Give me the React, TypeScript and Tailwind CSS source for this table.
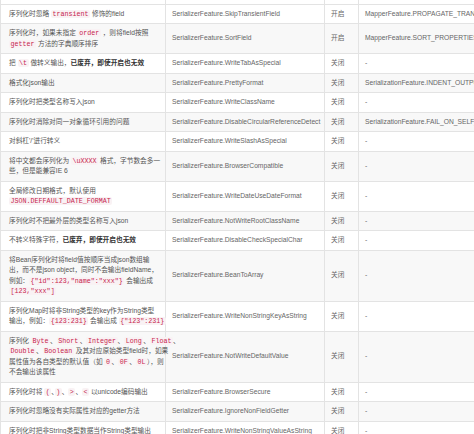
import type { ReactNode } from 'react'

type Row = {
  desc: ReactNode[]
  feature: string
  state: string
  jackson: string
}

const C = ({ children }: { children: ReactNode }) => (
  <code className="rounded-[2px] bg-[#f9f2f4] px-[1.5px] font-['Liberation_Mono',monospace] text-[#c7254e]">
    {children}
  </code>
)

const B = ({ children }: { children: ReactNode }) => (
  <b className="font-bold text-[#333]">{children}</b>
)

const ROWS: Row[] = [
  { desc: [<>序列化时忽略 <C>transient</C> 修饰的field</>], feature: 'SkipTransientField', state: '开启', jackson: 'MapperFeature.PROPAGATE_TRANSIENT_MARKER' },
  { desc: [<>序列化时，如果未指定 <C>order</C> ，则将field按照</>, <><C>getter</C> 方法的字典顺序排序</>], feature: 'SortField', state: '开启', jackson: 'MapperFeature.SORT_PROPERTIES_ALPHABETICALLY' },
  { desc: [<>把 <C>\t</C> 做转义输出，<B>已废弃，即使开启也无效</B></>], feature: 'WriteTabAsSpecial', state: '关闭', jackson: '-' },
  { desc: ['格式化json输出'], feature: 'PrettyFormat', state: '关闭', jackson: 'SerializationFeature.INDENT_OUTPUT' },
  { desc: ['序列化时把类型名称写入json'], feature: 'WriteClassName', state: '关闭', jackson: '-' },
  { desc: ['序列化时消除对同一对象循环引用的问题'], feature: 'DisableCircularReferenceDetect', state: '关闭', jackson: 'SerializationFeature.FAIL_ON_SELF_REFERENCES' },
  { desc: ["对斜杠'/'进行转义"], feature: 'WriteSlashAsSpecial', state: '关闭', jackson: '-' },
  { desc: [<>将中文都会序列化为 <C>\uXXXX</C> 格式，字节数会多一</>, '些，但是能兼容IE 6'], feature: 'BrowserCompatible', state: '关闭', jackson: '-' },
  { desc: ['全局修改日期格式，默认使用', <C>JSON.DEFFAULT_DATE_FORMAT</C>], feature: 'WriteDateUseDateFormat', state: '关闭', jackson: '-' },
  { desc: ['序列化时不把最外层的类型名称写入json'], feature: 'NotWriteRootClassName', state: '关闭', jackson: '-' },
  { desc: [<>不转义特殊字符，<B>已废弃，即使开启也无效</B></>], feature: 'DisableCheckSpecialChar', state: '关闭', jackson: '-' },
  {
    desc: [
      '将Bean序列化时将field值按顺序当成json数组输',
      '出，而不是json object，同时不会输出fieldName，',
      <>例如：<C>{'{"id":123,"name":"xxx"}'}</C> 会输出成</>,
      <C>[123,"xxx"]</C>,
    ],
    feature: 'BeanToArray', state: '关闭', jackson: '-',
  },
  {
    desc: ['序列化Map时将非String类型的key作为String类型', <>输出，例如：<C>{'{123:231}'}</C> 会输出成 <C>{'{"123":231}'}</C></>],
    feature: 'WriteNonStringKeyAsString', state: '关闭', jackson: '-',
  },
  {
    desc: [
      <>序列化 <C>Byte</C>、<C>Short</C>、<C>Integer</C>、<C>Long</C>、<C>Float</C>、</>,
      <><C>Double</C>、<C>Boolean</C> 及其对应原始类型field时，如果</>,
      <>属性值为各自类型的默认值（如 <C>0</C>、<C>0F</C>、<C>0L</C>），则</>,
      '不会输出该属性',
    ],
    feature: 'NotWriteDefaultValue', state: '关闭', jackson: '-',
  },
  { desc: [<>序列化时将 <C>(</C>、<C>)</C>、<C>&gt;</C>、<C>&lt;</C> 以unicode编码输出</>], feature: 'BrowserSecure', state: '关闭', jackson: '-' },
  { desc: ['序列化时忽略没有实际属性对应的getter方法'], feature: 'IgnoreNonFieldGetter', state: '关闭', jackson: '-' },
  { desc: ['序列化时把非String类型数据当作String类型输出'], feature: 'WriteNonStringValueAsString', state: '关闭', jackson: '-' },
]

const cell = 'border border-[#e3e3e3] px-[6px] py-[4px] align-middle'

export default function App() {
  return (
    <div className="h-[434px] w-[474px] overflow-hidden bg-white font-['Liberation_Sans','Noto_Sans_CJK_SC',sans-serif] text-[6.7px] leading-[10.5px] text-[#666]">
      <table className="w-[680px] table-fixed border-collapse">
        <colgroup>
          <col className="w-[165px]" />
          <col className="w-[159px]" />
          <col className="w-[34px]" />
          <col />
        </colgroup>
        <tbody>
          <tr className="h-[4px]">
            <td className="border-x border-[#e3e3e3]" />
            <td className="border-x border-[#e3e3e3]" />
            <td className="border-x border-[#e3e3e3]" />
            <td className="border-x border-[#e3e3e3]" />
          </tr>
          {ROWS.map((r, i) => (
            <tr key={r.feature} className={i % 2 === 1 ? 'bg-[#f8f8f8]' : 'bg-white'}>
              <td className={`${cell} pl-[8px] text-[#555]`}>
                {r.desc.map((line, j) => (
                  <div key={j} className="whitespace-nowrap">{line}</div>
                ))}
              </td>
              <td className={`${cell} whitespace-nowrap`}>SerializerFeature.{r.feature}</td>
              <td className={cell}>{r.state}</td>
              <td className={`${cell} whitespace-nowrap`}>{r.jackson}</td>
            </tr>
          ))}
        </tbody>
      </table>
    </div>
  )
}
